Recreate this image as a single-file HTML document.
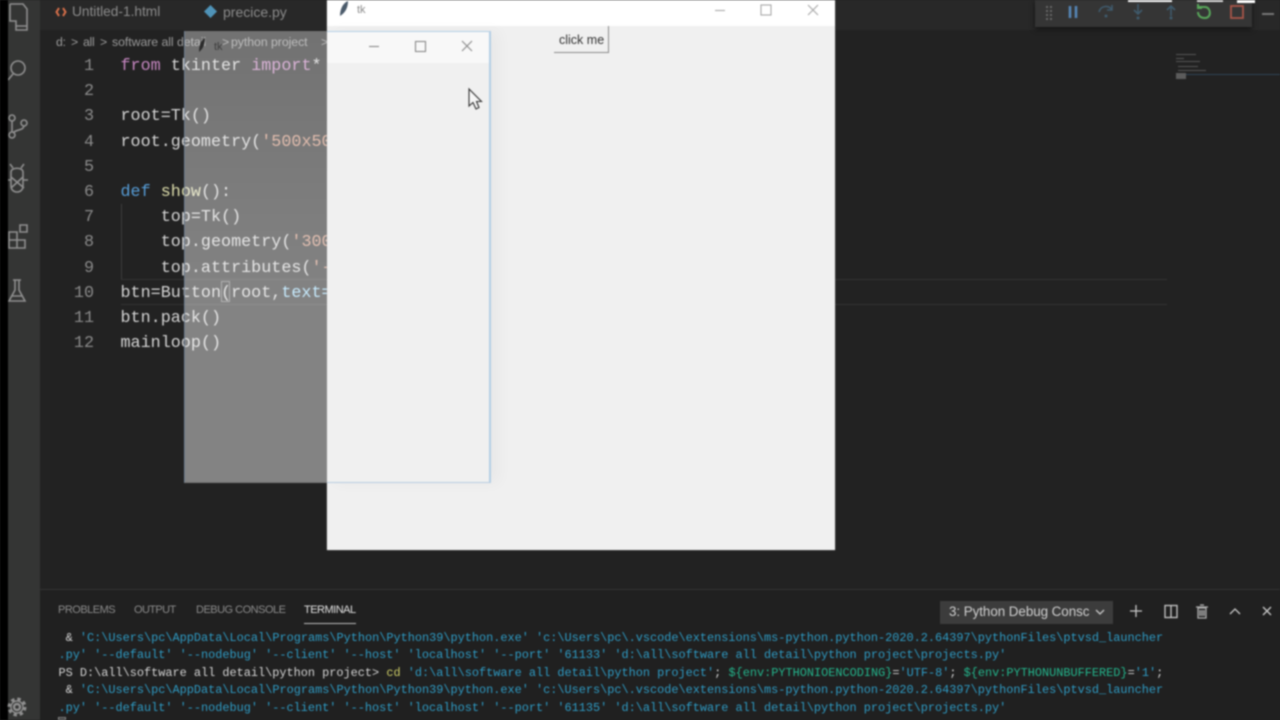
<!DOCTYPE html>
<html><head><meta charset="utf-8"><style>
html,body{margin:0;padding:0;width:1280px;height:720px;overflow:hidden;background:#222}
#w{position:absolute;left:0;top:0;width:1280px;height:720px;overflow:hidden;background:#222;filter:blur(.7px)}
#w div,#w svg{position:absolute}
.c{font:16.75px/25.18px "Liberation Mono",monospace;color:#d4d4d4;white-space:pre;left:120.500px}
.n{font:16.75px/25.18px "Liberation Mono",monospace;color:#8a8a8a;left:60px;width:34px;text-align:right}
.t{font:11.88px/17.6px "Liberation Mono",monospace;color:#2e9bc4;white-space:pre;left:58.500px}
.s{font:12px/16px "Liberation Sans",sans-serif;white-space:pre}
.k{color:#c586c0}.b{color:#569cd6}.o{color:#ce9178}.y{color:#dcdcaa}.l{color:#9cdcfe}.g{color:#23b58c}.w{color:#d4d4d4}.e{color:#cccc66}
.p{color:#8a8a8a;font-size:11px;letter-spacing:-.5px;top:602px}
.r{color:#9a9a9a;top:34px;font-size:12.300px;letter-spacing:-.3px}
</style></head><body><div id="w">
<div style="left:0;top:0;width:8px;height:720px;background:#000"></div>
<div style="left:8px;top:0;width:32px;height:720px;background:#343534"></div>
<div style="left:40px;top:0;width:1240px;height:30px;background:#282828"></div>

<svg style="left:8px;top:0" width="32" height="320" fill="none" stroke="#8f8f8f" stroke-width="1.6">
<path d="M2 4H15L19 9V26H8M2 4V21H8V30H19V26"/>
<circle cx="10" cy="68" r="7"/><path d="M5 74L0 80"/>
<circle cx="4" cy="118" r="3"/><circle cx="4" cy="135" r="3"/><circle cx="16" cy="123" r="3"/><path d="M4 121V132M16 126C15 131 8 129 5 133"/>
<path d="M3 172C3 167 15 167 15 172V186C15 194 3 194 3 186ZM3 177L16 188M15 177L3 188M3 180H-2M15 180H20M5 168L2 164M13 168L16 164" />
<path d="M1 232H9V240H17V248H1ZM9 240V248M1 240H9M12 225H19V232H12Z"/>
<path d="M5 280H13M7 280V290L1 301H17L11 290V280M3 296H15"/>
</svg>
<svg style="left:4px;top:694px" width="24" height="26" fill="none" stroke="#8f8f8f" stroke-width="2.4">
<circle cx="13" cy="13" r="3"/><circle cx="13" cy="13" r="7.5" stroke-dasharray="3.2 2.7" stroke-width="4"/><circle cx="13" cy="13" r="6"  stroke-width="1.4"/>
</svg>

<div class="s" style="left:72px;top:4px;color:#8b8b8b;font-size:13.700px">Untitled-1.html</div>
<svg style="left:55px;top:6px" width="12" height="12" fill="none" stroke="#d9704a" stroke-width="2"><path d="M4 2L1.500 6L4 10M8 2L10.500 6L8 10"/></svg>
<div class="s" style="left:223px;top:4px;color:#8b8b8b;font-size:14px">precice.py</div>
<svg style="left:204px;top:5px" width="13" height="13"><path d="M6.500 0L13 6.500L6.500 13L0 6.500Z" fill="#4f93b8"/></svg>

<div class="s r" style="left:56px">d:</div>
<div class="s r" style="left:71px">&gt;</div>
<div class="s r" style="left:83px">all</div>
<div class="s r" style="left:100px">&gt;</div>
<div class="s r" style="left:112px;letter-spacing:-.05px">software all detail</div>
<div class="s r" style="left:222px">&gt;</div>
<div class="s r" style="left:231px;letter-spacing:-.05px">python project</div>
<div class="s r" style="left:321px">&gt;</div>

<div class="n" style="top:54px">1<br>2<br>3<br>4<br>5<br>6<br>7<br>8<br>9<br>10<br>11<br>12</div>
<div class="c" style="top:54px"><span class="k">from</span> tkinter <span class="k">import</span>*

root=Tk()
root.geometry(<span class="o">'500x500'</span>)

<span class="b">def</span> <span class="y">show</span>():
    top=Tk()
    top.geometry(<span class="o">'300x300'</span>)
    top.attributes(<span class="o">'-alpha'</span>)
btn=Button(root,<span class="l">text=</span>
btn.pack()
mainloop()</div>
<div style="left:121px;top:204px;width:1px;height:75px;background:#3c3c3c"></div>
<div style="left:121px;top:279px;width:1046px;height:1px;background:#333"></div>
<div style="left:121px;top:304px;width:1046px;height:1px;background:#333"></div>
<div style="left:221px;top:281px;width:9px;height:21px;border:1px solid #777;box-sizing:border-box"></div>

<div style="left:1176px;top:54px;width:20px;height:1px;background:#555"></div>
<div style="left:1176px;top:58px;width:8px;height:1px;background:#555"></div>
<div style="left:1176px;top:61px;width:24px;height:1px;background:#555"></div>
<div style="left:1178px;top:66px;width:20px;height:1px;background:#555"></div>
<div style="left:1178px;top:70px;width:28px;height:1px;background:#555"></div>
<div style="left:1176px;top:74px;width:104px;height:1px;background:#2f4355"></div>
<div style="left:1176px;top:73px;width:10px;height:6px;background:#5c5c5c"></div>

<div style="left:184px;top:31px;width:143px;height:452px;background:linear-gradient(rgba(255,255,255,.36),rgba(255,255,255,.44) 60%);border-left:1px solid #6f7f92;box-sizing:border-box;border-bottom:1px solid #777"></div>
<div class="s" style="left:214px;top:39px;color:#3c3c3c;font-size:11px">tk</div>
<svg style="left:198px;top:38px" width="8" height="15"><path d="M7 0C3 2 1 7 1 14C5 11 7 6 7 0Z" fill="#2b2b2b"/></svg>

<div style="left:327px;top:0;width:508px;height:550px;background:#f0f0f0;box-shadow:0 0 1px #999"></div>
<div style="left:327px;top:0;width:508px;height:26px;background:#fff"></div>
<svg style="left:339px;top:1px" width="10" height="16"><path d="M9 0C4 2 1 8 1 15C6 12 9 7 9 0Z" fill="#4a5a6a"/></svg>
<div class="s" style="left:357px;top:2px;color:#8a8a8a;font-size:11px">tk</div>
<svg style="left:710px;top:0" width="115" height="20" fill="none" stroke="#a8a8a8" stroke-width="1.1">
<path d="M5 10.500H15"/><rect x="51" y="5" width="10" height="10"/><path d="M98 5L108 15M108 5L98 15"/></svg>

<div style="left:554px;top:26px;width:55px;height:27px;background:#f0f0f0;border-right:1.500px solid #8a8a8a;border-bottom:1.500px solid #8a8a8a;box-sizing:border-box"></div>
<div class="s" style="left:559px;top:32px;color:#333;font-size:12.500px">click me</div>

<div style="left:327px;top:31px;width:164px;height:452px;background:#f0f0f0;border-right:2px solid #b3cee5;border-bottom:1px solid #b8cde0;border-top:1px solid #b5d0e6;box-sizing:border-box;box-shadow:8px 0 14px rgba(0,0,0,.035)"></div>
<div style="left:327px;top:32px;width:162px;height:31px;background:#f8f8f8"></div>
<svg style="left:360px;top:36px" width="118" height="20" fill="none" stroke="#8a8a8a" stroke-width="1.1">
<path d="M9 10.500H19"/><rect x="55.500" y="5.500" width="10" height="10"/><path d="M102 5L112 15M112 5L102 15"/></svg>
<svg style="left:466px;top:87px" width="18" height="25"><path d="M3 2V19L7 15.500L10 22L13 20.500L10.500 14.500H15.500Z" fill="#f6f6f6" stroke="#333" stroke-width="1.1"/></svg>

<div style="left:1035px;top:0;width:217px;height:27px;background:#353535;box-shadow:0 2px 5px rgba(0,0,0,.6)"></div>
<svg style="left:1035px;top:0" width="217" height="27" fill="none" stroke-width="1.6">
<path d="M11 7H17M11 11H17M11 15H17M11 19H17" stroke="#666" stroke-dasharray="2 2" stroke-width="2"/>
<path d="M35 6V18M41 6V18" stroke="#5585b5" stroke-width="2.600"/>
<path d="M64 12C66 5 74 5 77 10M77 5V10H72" stroke="#3f5a6c"/><circle cx="71" cy="16" r="1.500" fill="#3f5a6c" stroke="none"/>
<path d="M103 4V13M99 10L103 14L107 10" stroke="#3f5a6c"/><circle cx="103" cy="18" r="1.500" fill="#3f5a6c" stroke="none"/>
<path d="M136 16V7M132 10L136 6L140 10" stroke="#3f5a6c"/><circle cx="136" cy="18" r="1.500" fill="#3f5a6c" stroke="none"/>
<path d="M163 7H170C176 7 177 18 170 18C165 18 163 15 163 12M163 4V8H167" stroke="#58a65a" stroke-width="2"/>
<rect x="196" y="6" width="12" height="12" stroke="#a85648" stroke-width="1.800"/></svg>
<div style="left:1128px;top:0;width:44px;height:2px;background:#fff"></div>
<div style="left:1197px;top:0;width:26px;height:2px;background:#ddd"></div>
<div style="left:1237px;top:0;width:18px;height:3px;background:#fff"></div>
<div style="left:1262px;top:13px;width:12px;height:2px;background:#777"></div>

<div style="left:40px;top:589px;width:1240px;height:131px;background:#202020;border-top:1px solid #333;box-sizing:border-box"></div>
<div class="s p" style="left:58px">PROBLEMS</div>
<div class="s p" style="left:134px;letter-spacing:-.6px">OUTPUT</div>
<div class="s p" style="left:196px">DEBUG CONSOLE</div>
<div class="s p" style="left:304px;color:#e0e0e0">TERMINAL</div>
<div style="left:304px;top:623px;width:52px;height:1px;background:#bbb"></div>

<div style="left:940px;top:601px;width:173px;height:23px;background:#3c3c3c"></div>
<div class="s" style="left:949px;top:604px;color:#d0d0d0;font-size:13.400px;letter-spacing:-.05px">3: Python Debug Consc</div>
<svg style="left:1090px;top:600px" width="185" height="24" fill="none" stroke="#c8c8c8" stroke-width="1.300">
<path d="M6 10L10 14L14 10"/><path d="M46 5V17M40 11H52"/><rect x="75" y="5.500" width="12" height="12"/><path d="M81 5.500V17.500"/>
<path d="M108 8H116V18H108ZM106 7H118M110 5H114M110 10V16M112 10V16M114 10V16" stroke="#b0b0b0"/>
<path d="M140 14L145 9L150 14"/><path d="M173 7L181 15M181 7L173 15"/></svg>

<div class="t" style="top:629.500px"> <span class="w">&amp;</span> 'C:\Users\pc\AppData\Local\Programs\Python\Python39\python.exe' 'c:\Users\pc\.vscode\extensions\ms-python.python-2020.2.64397\pythonFiles\ptvsd_launcher
.py' '--default' '--nodebug' '--client' '--host' 'localhost' '--port' '61133' 'd:\all\software all detail\python project\projects.py'
<span class="w">PS D:\all\software all detail\python project&gt;</span> <span class="e">cd</span> 'd:\all\software all detail\python project'<span class="w">;</span> <span class="g">${env:PYTHONIOENCODING}</span><span class="w">=</span>'UTF-8'<span class="w">;</span> <span class="g">${env:PYTHONUNBUFFERED}</span><span class="w">=</span>'1'<span class="w">;</span>
 <span class="w">&amp;</span> 'C:\Users\pc\AppData\Local\Programs\Python\Python39\python.exe' 'c:\Users\pc\.vscode\extensions\ms-python.python-2020.2.64397\pythonFiles\ptvsd_launcher
.py' '--default' '--nodebug' '--client' '--host' 'localhost' '--port' '61135' 'd:\all\software all detail\python project\projects.py'</div>
<div style="left:58px;top:717px;width:8px;height:3px;border:1px solid #888;box-sizing:border-box"></div>
</div></body></html>
